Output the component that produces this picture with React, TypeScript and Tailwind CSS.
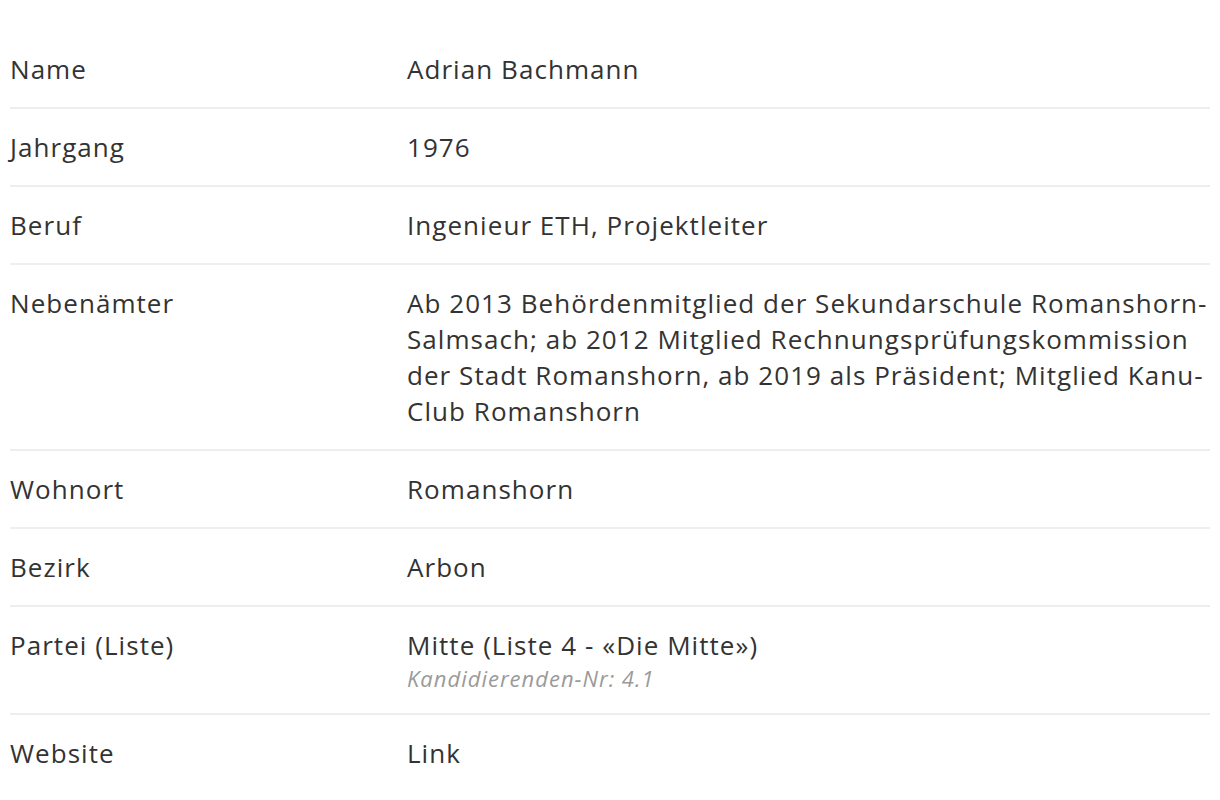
import React from "react";

const rows: { label: string; value: React.ReactNode }[] = [
  { label: "Name", value: "Adrian Bachmann" },
  { label: "Jahrgang", value: "1976" },
  { label: "Beruf", value: "Ingenieur ETH, Projektleiter" },
  {
    label: "Nebenämter",
    value: (
      <>
        <span className="block whitespace-nowrap">Ab 2013 Behördenmitglied der Sekundarschule Romanshorn-</span>
        <span className="block whitespace-nowrap">Salmsach; ab 2012 Mitglied Rechnungsprüfungskommission</span>
        <span className="block whitespace-nowrap">der Stadt Romanshorn, ab 2019 als Präsident; Mitglied Kanu-</span>
        <span className="block whitespace-nowrap">Club Romanshorn</span>
      </>
    ),
  },
  { label: "Wohnort", value: "Romanshorn" },
  { label: "Bezirk", value: "Arbon" },
  {
    label: "Partei (Liste)",
    value: (
      <>
        <span className="block">Mitte (Liste 4 - «Die Mitte»)</span>
        <span className="block text-[22px] leading-[30px] tracking-[1px] italic text-[#9a9a9a]">
          Kandidierenden-Nr: 4.1
        </span>
      </>
    ),
  },
  { label: "Website", value: "Link" },
];

export default function App() {
  return (
    <div
      className="bg-white min-h-[800px] px-[10px] pt-[31px] text-[#333333] text-[26px] leading-[36px] tracking-[1.05px]"
      style={{ fontFamily: '"Open Sans", "Noto Sans", sans-serif' }}
    >
      {rows.map((r, i) => (
        <div
          key={r.label}
          className={`flex py-[20px] ${i > 0 ? "border-t-2 border-[#eeeeee]" : ""}`}
        >
          <div className="w-[397px] shrink-0">{r.label}</div>
          <div className="flex-1">{r.value}</div>
        </div>
      ))}
    </div>
  );
}
